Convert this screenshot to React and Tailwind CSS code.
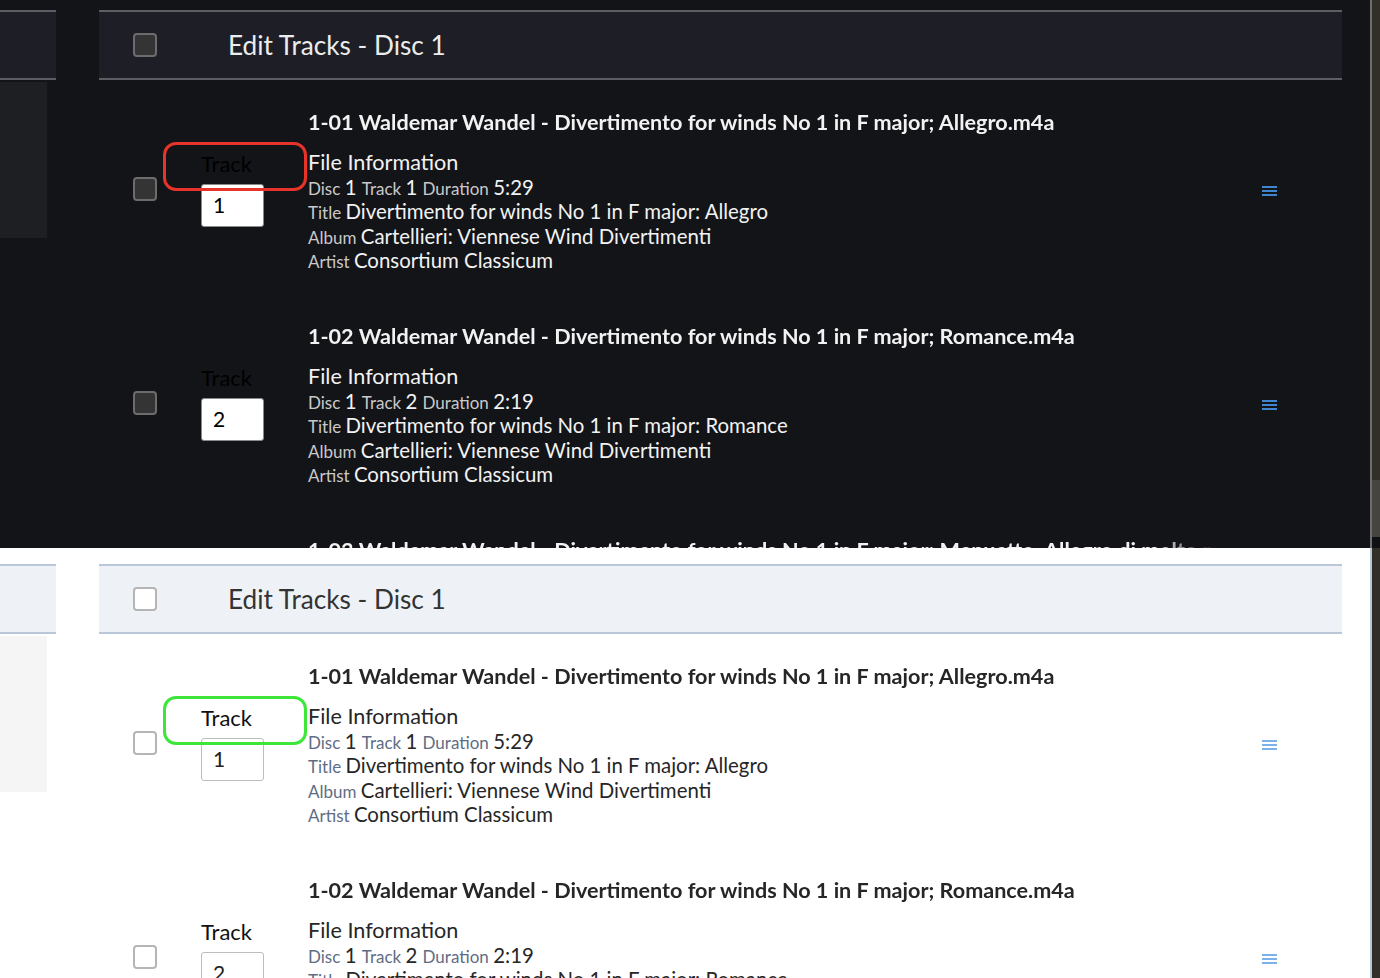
import React from "react";

const tracks = [
    {
        n: 1,
        file: "1-01 Waldemar Wandel - Divertimento for winds No 1 in F major; Allegro.m4a",
        dur: "5:29",
        title: "Divertimento for winds No 1 in F major: Allegro",
    },
    {
        n: 2,
        file: "1-02 Waldemar Wandel - Divertimento for winds No 1 in F major; Romance.m4a",
        dur: "2:19",
        title: "Divertimento for winds No 1 in F major: Romance",
    },
    {
        n: 3,
        file: "1-03 Waldemar Wandel - Divertimento for winds No 1 in F major; Menuetto. Allegro di molto.m4a",
        dur: "4:12",
        title: "Divertimento for winds No 1 in F major: Menuetto. Allegro di molto",
    },
];

const themes = {
    dark: {
        page: "bg-[#131418]",
        band: "bg-[#1d1e26] border-[#5d5e64]",
        side: "bg-[#1e1f22]",
        heading: "text-[#ececec]",
        box: "bg-[#343434] border-[#6c6c6c]",
        trackLabel: "text-black",
        input: "bg-white border-[#8a8a8a] text-black",
        text: "text-[#f2f2f2]",
        label: "text-[#c9c9c9]",
        icon: "bg-[#3f86cf]",
        line: "bg-[#6e6e6e]",
        ring: "border-[#e8332a]",
    },
    light: {
        page: "bg-white",
        band: "bg-[#eef2f6] border-[#b9c7d8]",
        side: "bg-[#f5f5f5]",
        heading: "text-[#333333]",
        box: "bg-white border-[#b5b5b5]",
        trackLabel: "text-[#111111]",
        input: "bg-white border-[#bdbdbd] text-[#222222]",
        text: "text-[#262626]",
        label: "text-[#5f6d84]",
        icon: "bg-[#7ab3ec]",
        line: "bg-[#b8c6d8]",
        ring: "border-[#3fe63a]",
    },
};

function Checkbox({ t }) {
    return <div className={`w-[24px] h-[24px] rounded-[4px] border-2 shrink-0 ${t.box}`} />;
}

function InfoLine({ children }) {
    return <div className="h-[24.5px] leading-[24.5px] whitespace-nowrap">{children}</div>;
}

function TrackRow({ track, t, mark }) {
    const lbl = `text-[17px] ${t.label}`;
    return (
        <div className="relative flex items-center h-[214px]">
            <div className="ml-[34px]">
                <Checkbox t={t} />
            </div>
            {/* track number field */}
            <div className="ml-[44px] w-[63px] shrink-0 flex flex-col">
                <div className={`text-[22px] leading-[26px] ${t.trackLabel}`}>Track</div>
                <div className={`mt-[7px] h-[43px] border rounded-[3px] pl-[11px] text-[21px] leading-[40px] ${t.input}`}>
                    {track.n}
                </div>
            </div>
            <div className="ml-[44px] flex-1 min-w-0 pt-[2px]">
                <div className={`h-[30px] text-[21.6px] leading-[30px] font-bold whitespace-nowrap overflow-hidden [mask-image:linear-gradient(to_right,black_93%,transparent)] ${t.text}`}>
                    {track.file}
                </div>
                <div className={`mt-[13px] text-[20.4px] ${t.text}`}>
                    <InfoLine>
                        <span className="text-[21.6px]">File Information</span>
                    </InfoLine>
                    <InfoLine>
                        <span className={lbl}>Disc </span>1{" "}
                        <span className={lbl}>Track </span>{track.n}{" "}
                        <span className={lbl}>Duration </span>{track.dur}
                    </InfoLine>
                    <InfoLine>
                        <span className={lbl}>Title </span>{track.title}
                    </InfoLine>
                    <InfoLine>
                        <span className={lbl}>Album </span>Cartellieri: Viennese Wind Divertimenti
                    </InfoLine>
                    <InfoLine>
                        <span className={lbl}>Artist </span>Consortium Classicum
                    </InfoLine>
                </div>
            </div>
            {/* drag handle */}
            <div className="ml-[44px] mr-[65px] mt-[4px] w-[15px] flex flex-col gap-[2px] shrink-0">
                <div className={`h-[2px] ${t.icon}`} />
                <div className={`h-[2px] ${t.icon}`} />
                <div className={`h-[2px] ${t.icon}`} />
            </div>
            {mark && (
                <div className={`absolute left-[64px] top-[60px] w-[144px] h-[49px] border-[3px] rounded-[13px] ${t.ring}`} />
            )}
        </div>
    );
}

function Panel({ mode }) {
    const t = themes[mode];
    const dark = mode === "dark";
    return (
        <div className={`flex ${dark ? "h-[548px]" : "h-[430px]"} overflow-hidden ${t.page}`}>
            <div className={`w-[1370px] flex ${dark ? "-mt-[6px]" : ""}`}>
                {/* sidebar */}
                <div className="w-[56px] pt-[16px] flex flex-col">
                    <div className={`h-[70px] border-y-2 ${t.band}`} />
                    <div className={`w-[47px] h-[156px] mt-[2px] ${t.side}`} />
                </div>
                {/* main list */}
                <div className="ml-[43px] w-[1243px] pt-[16px]">
                    <div className={`h-[70px] border-y-2 flex items-center ${t.band}`}>
                        <div className="ml-[34px]">
                            <Checkbox t={t} />
                        </div>
                        <div className={`ml-[71px] mt-[2px] text-[26.2px] ${t.heading}`}>Edit Tracks - Disc 1</div>
                    </div>
                    <div className="pt-[2px]">
                        {tracks.map((track, i) => (
                            <TrackRow key={track.n} track={track} t={t} mark={i === 0} />
                        ))}
                    </div>
                </div>
            </div>
            {/* scrollbar strip */}
            <div className={`w-[2px] ${t.line}`} />
            <div className="w-[8px] flex flex-col">
                {dark ? (
                    <>
                        <div className="h-[480px] bg-[#312f27]" />
                        <div className="h-[57px] bg-[#46443e]" />
                        <div className="flex-1 bg-[#0f1013]" />
                    </>
                ) : (
                    <div className="flex-1 bg-[#312f27]" />
                )}
            </div>
        </div>
    );
}

export default function App() {
    return (
        <div className="w-[1380px] h-[978px] overflow-hidden font-['Lato',sans-serif]">
            <Panel mode="dark" />
            <Panel mode="light" />
        </div>
    );
}
